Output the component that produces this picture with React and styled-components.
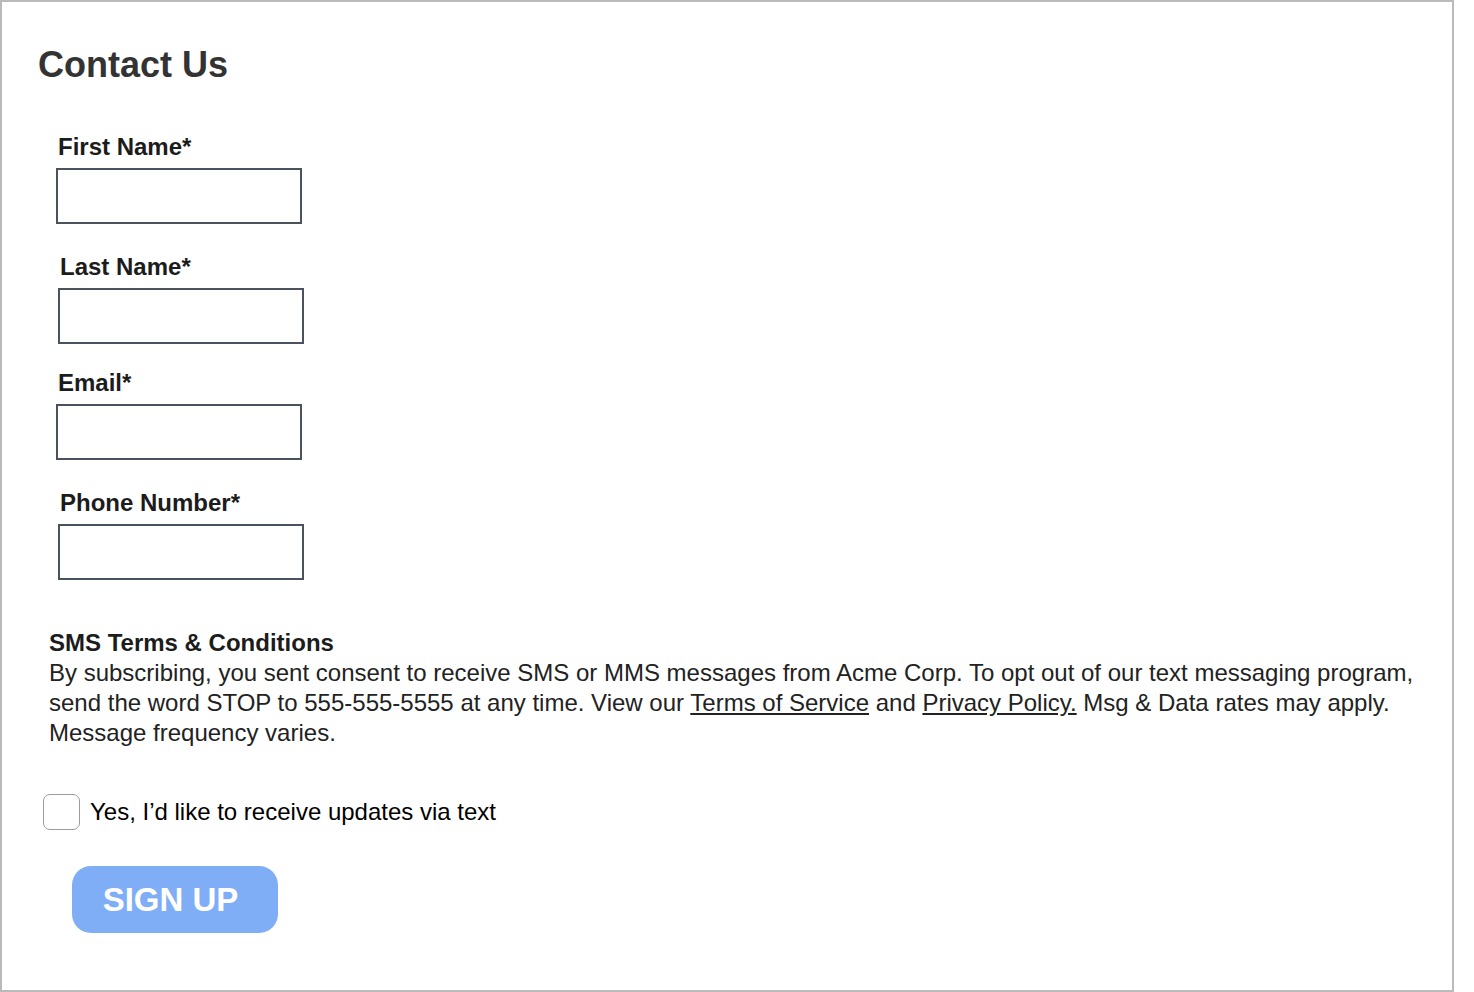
import React, { useState } from "react";
import styled, { createGlobalStyle } from "styled-components";

const GlobalStyle = createGlobalStyle`
  * {
    box-sizing: border-box;
  }
  body {
    margin: 0;
    background: #fff;
    font-family: "Liberation Sans", Arial, Helvetica, sans-serif;
  }
`;

const fields = [
  { id: "firstName", label: "First Name*", offset: 18, gap: 52 },
  { id: "lastName", label: "Last Name*", offset: 20, gap: 31 },
  { id: "email", label: "Email*", offset: 18, gap: 27 },
  { id: "phone", label: "Phone Number*", offset: 20, gap: 31 },
];

const App = () => {
  const [values, setValues] = useState({});
  const [optIn, setOptIn] = useState(false);

  const onChangeHandler = (id, value) => {
    setValues((prev) => ({ ...prev, [id]: value }));
  };

  return (
    <>
      <GlobalStyle />
      <Frame>
        <Title>Contact Us</Title>
        <Form onSubmit={(e) => e.preventDefault()}>
          {fields.map((f) => (
            <Field key={f.id} $offset={f.offset} $gap={f.gap}>
              <Label htmlFor={f.id}>{f.label}</Label>
              <TextInput
                id={f.id}
                type={f.id === "email" ? "email" : "text"}
                value={values[f.id] || ""}
                onChange={(e) => onChangeHandler(f.id, e.target.value)}
              />
            </Field>
          ))}

          <Terms>
            <TermsTitle>SMS Terms &amp; Conditions</TermsTitle>
            <TermsText>
              By subscribing, you sent consent to receive SMS or MMS messages
              from Acme Corp. To opt out of our text messaging program, send
              the word STOP to 555-555-5555 at any time. View our{" "}
              <TermsLink href="#">Terms of Service</TermsLink> and{" "}
              <TermsLink href="#">Privacy Policy.</TermsLink> Msg &amp; Data
              rates may apply. Message frequency varies.
            </TermsText>
          </Terms>

          <CheckRow>
            <CheckBox
              type="checkbox"
              checked={optIn}
              onChange={(e) => setOptIn(e.target.checked)}
            />
            <span>Yes, I’d like to receive updates via text</span>
          </CheckRow>

          <SubmitButton type="submit">SIGN UP</SubmitButton>
        </Form>
      </Frame>
    </>
  );
};

export default App;

const Frame = styled.div`
  width: 1454px;
  height: 992px;
  border: 2px solid #bababa;
  padding: 45px 20px 0 36px;
  background: #fff;
`;

const Title = styled.h1`
  margin: 0;
  font-size: 36px;
  line-height: 1;
  font-weight: 700;
  color: #333;
`;

const Form = styled.form`
  display: flex;
  flex-direction: column;
  align-items: flex-start;
`;

const Field = styled.div`
  display: flex;
  flex-direction: column;
  align-items: flex-start;
  margin-top: ${({ $gap }) => $gap}px;
  margin-left: ${({ $offset }) => $offset}px;
`;

const Label = styled.label`
  margin: 0 0 9px 2px;
  font-size: 24px;
  line-height: 1;
  font-weight: 700;
  color: #1c1c1c;
`;

const TextInput = styled.input`
  width: 246px;
  height: 56px;
  border: 2px solid #48535e;
  border-radius: 0;
  padding: 0 10px;
  font-size: 20px;
  font-family: inherit;
  outline: none;
`;

const Terms = styled.div`
  margin: 48px 0 0 11px;
  font-size: 24px;
  line-height: 30px;
  color: #222;
`;

const TermsTitle = styled.div`
  font-weight: 700;
  color: #1c1c1c;
`;

const TermsText = styled.p`
  margin: 0;
`;

const TermsLink = styled.a`
  color: inherit;
  text-decoration: underline;
  text-underline-offset: 2px;
`;

const CheckRow = styled.label`
  display: flex;
  align-items: center;
  gap: 10px;
  margin: 46px 0 0 5px;
  font-size: 24px;
  line-height: 1;
  color: #000;
`;

const CheckBox = styled.input`
  appearance: none;
  margin: 0;
  width: 37px;
  height: 36px;
  border: 1.5px solid #9c9c9c;
  border-radius: 7px;
  background: #fff;
  flex-shrink: 0;
  &:checked {
    background: #80aef6;
    border-color: #80aef6;
  }
`;

const SubmitButton = styled.button`
  margin: 36px 0 0 34px;
  width: 206px;
  height: 67px;
  padding: 0 9px 0 0;
  border: none;
  border-radius: 19px;
  background: #80aef6;
  color: #fff;
  font-family: inherit;
  font-size: 33px;
  font-weight: 700;
  cursor: pointer;
`;
